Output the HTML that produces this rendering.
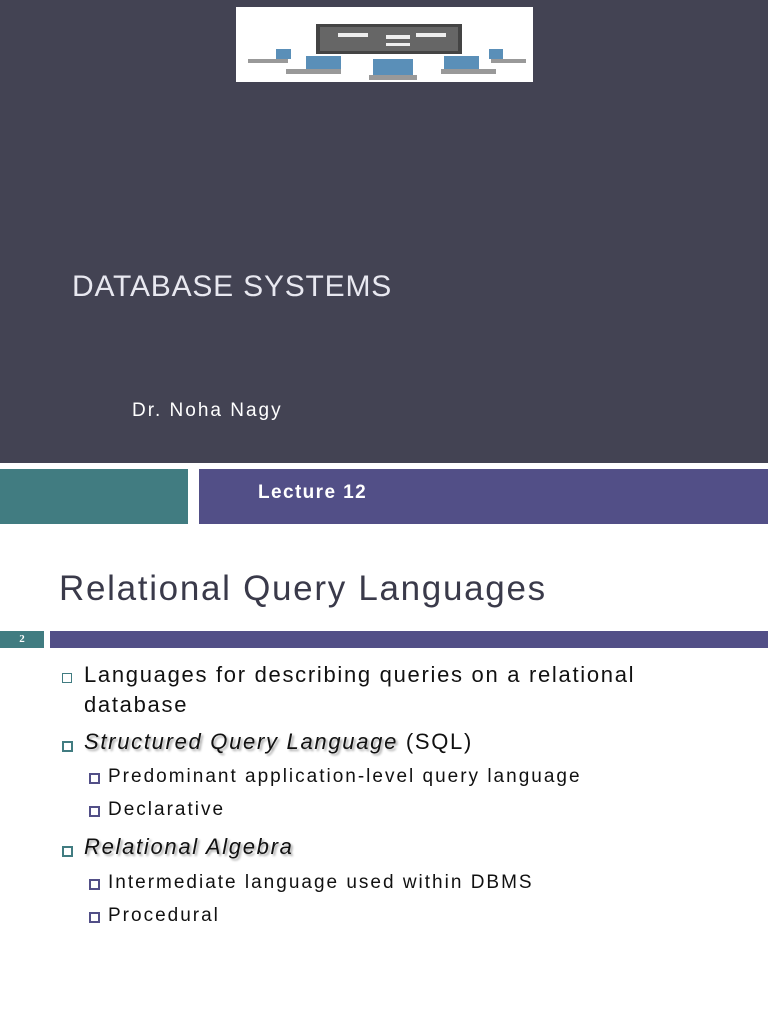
<!DOCTYPE html>
<html><head><meta charset="utf-8"><style>
body{margin:0;width:768px;height:1024px;position:relative;background:#fff;font-family:"Liberation Sans",sans-serif;overflow:hidden}
.a{position:absolute;white-space:nowrap}
.sq{position:absolute;box-sizing:border-box}
.b{letter-spacing:1.7px}
.s{letter-spacing:2px}
</style></head><body>
<div class="a" style="left:0;top:0;width:768px;height:463px;background:#434353"></div>
<div class="a" style="left:236px;top:7px;width:297px;height:75px;background:#fff">
<svg width="297" height="75" viewBox="0 0 297 75">
<rect x="80" y="17" width="146" height="30" fill="#444"/>
<rect x="84" y="20" width="138" height="24" fill="#666"/>
<g fill="#eee"><rect x="102" y="26" width="30" height="4"/><rect x="150" y="28" width="24" height="4"/><rect x="180" y="26" width="30" height="4"/><rect x="150" y="36" width="24" height="3"/></g>
<g fill="#5a8fb8"><rect x="40" y="42" width="15" height="10"/><rect x="70" y="49" width="35" height="14"/><rect x="137" y="52" width="40" height="16"/><rect x="208" y="49" width="35" height="14"/><rect x="253" y="42" width="14" height="10"/></g>
<g fill="#999"><rect x="12" y="52" width="40" height="4"/><rect x="50" y="62" width="55" height="5"/><rect x="133" y="68" width="48" height="5"/><rect x="205" y="62" width="55" height="5"/><rect x="255" y="52" width="35" height="4"/></g>
</svg></div>
<div class="a" style="left:72px;top:270px;color:#e8e8f0;font-size:30px;letter-spacing:0.8px">DATABASE SYSTEMS</div>
<div class="a" style="left:132px;top:400px;color:#fff;font-size:19px;letter-spacing:2px">Dr. Noha Nagy</div>
<div class="a" style="left:0;top:469px;width:188px;height:55px;background:#417c81"></div>
<div class="a" style="left:199px;top:469px;width:569px;height:55px;background:#524f87"></div>
<div class="a" style="left:258px;top:482px;color:#fff;font-size:19px;font-weight:bold;letter-spacing:1.4px">Lecture 12</div>
<div class="a" style="left:59px;top:569px;color:#3a3a4a;font-size:35px;letter-spacing:1.7px">Relational Query Languages</div>
<div class="a" style="left:0;top:631px;width:44px;height:17px;background:#417c81;color:#fff;font:bold 11px 'Liberation Serif',serif;text-align:center;line-height:17px">2</div>
<div class="a" style="left:50px;top:631px;width:718px;height:17px;background:#524f87"></div>
<div class="sq" style="left:62px;top:673px;width:10px;height:10px;border:1.5px solid #417c81"></div>
<div class="a b" style="left:84px;top:660px;font-size:22px;color:#111;line-height:30px">Languages for describing queries on a relational<br>database</div>
<div class="sq" style="left:62px;top:741px;width:11px;height:11px;border:2px solid #417c81"></div>
<div class="a b" style="left:84px;top:729px;font-size:22px;color:#111"><i style="text-shadow:2px 2px 2px #aaa">Structured Query Language</i> (SQL)</div>
<div class="sq" style="left:89px;top:773px;width:11px;height:11px;border:2.5px solid #524f87"></div>
<div class="a s" style="left:108px;top:766px;font-size:19px;color:#111">Predominant application-level query language</div>
<div class="sq" style="left:89px;top:806px;width:11px;height:11px;border:2.5px solid #524f87"></div>
<div class="a s" style="left:108px;top:799px;font-size:19px;color:#111">Declarative</div>
<div class="sq" style="left:62px;top:846px;width:11px;height:11px;border:2px solid #417c81"></div>
<div class="a b" style="left:84px;top:834px;font-size:22px;color:#111"><i style="text-shadow:2px 2px 2px #aaa">Relational Algebra</i></div>
<div class="sq" style="left:89px;top:879px;width:11px;height:11px;border:2.5px solid #524f87"></div>
<div class="a s" style="left:108px;top:872px;font-size:19px;color:#111">Intermediate language used within DBMS</div>
<div class="sq" style="left:89px;top:912px;width:11px;height:11px;border:2.5px solid #524f87"></div>
<div class="a s" style="left:108px;top:905px;font-size:19px;color:#111">Procedural</div>
</body></html>
